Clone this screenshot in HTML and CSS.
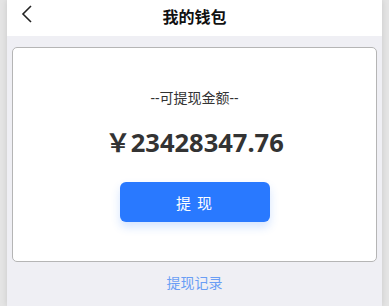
FILE: index.html
```html
<!DOCTYPE html>
<html lang="zh">
<head>
<meta charset="utf-8">
<link rel="stylesheet" href="styles.css">
</head>
<body>
<div class="phone">
  <header class="nav">
    <svg class="back" width="14" height="20" viewBox="0 0 14 20"><path d="M11 2 L3 10 L11 18" fill="none" stroke="#222" stroke-width="1.6"/></svg>
    <div class="title">我的钱包</div>
  </header>
  <main class="page">
    <section class="card">
      <div class="label">--可提现金额--</div>
      <div class="amount">￥23428347.76</div>
      <button class="btn">提 现</button>
    </section>
    <div class="record">提现记录</div>
  </main>
</div>
</body>
</html>
```
FILE: styles.css
```css
html, body { margin: 0; padding: 0; }
body {
  background: #e4e4e4;
  font-family: "Noto Sans", "Noto Sans CJK SC", sans-serif;
  width: 389px;
  height: 306px;
  overflow: hidden;
}
.phone {
  margin-left: 7px;
  width: 375px;
  height: 306px;
  background: #efeff4;
  box-shadow: 0 0 6px rgba(0,0,0,0.12);
}
.nav {
  height: 36px;
  background: #fff;
  position: relative;
  display: flex;
  align-items: center;
  justify-content: center;
}
.back { position: absolute; left: 13px; top: 4px; }
.title {
  font-size: 16px;
  font-weight: 700;
  color: #111;
  line-height: 20px;
  margin-bottom: 3px;
}
.page {
  padding: 11px 5px 0 5px;
}
.card {
  height: 213px;
  background: #fff;
  border: 1px solid #b5b5b5;
  border-radius: 5px;
  display: flex;
  flex-direction: column;
  align-items: center;
}
.label {
  margin-top: 41px;
  font-size: 14px;
  color: #333;
  line-height: 18px;
}
.amount {
  margin-top: 20px;
  font-size: 25.5px;
  font-weight: 700;
  color: #333;
  line-height: 30px;
}
.btn {
  margin-top: 25px;
  width: 150px;
  height: 40px;
  border: none;
  border-radius: 6px;
  background: #2979ff;
  color: #fff;
  font-family: inherit;
  font-size: 15px;
  letter-spacing: 1px;
  box-shadow: 0 5px 10px rgba(41,121,255,0.2);
}
.record {
  text-align: center;
  margin-top: 12px;
  font-size: 14px;
  color: #6a9ef5;
  line-height: 18px;
}
```
